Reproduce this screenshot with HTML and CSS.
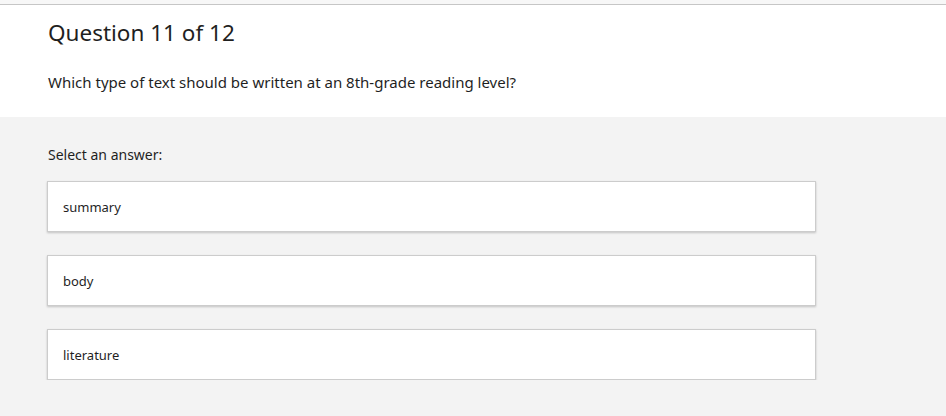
FILE: index.html
```html
<!DOCTYPE html>
<html lang="en">
  <head>
    <meta charset="UTF-8" />
    <title>Question 11 of 12</title>
    <link rel="stylesheet" href="styles.css">
  </head>
  <body>
    <div class="quiz-topline"></div>
    <div class="quiz-head">
      <h1 class="quiz-title">Question 11 of 12</h1>
      <p class="quiz-question">Which type of text should be written at an 8th-grade reading level?</p>
    </div>
    <div class="quiz-body">
      <div class="quiz-prompt">Select an answer:</div>
      <div class="quiz-options">
        <button class="quiz-option">summary</button>
        <button class="quiz-option">body</button>
        <button class="quiz-option">literature</button>
      </div>
    </div>
  </body>
</html>
```

FILE: styles.css
```css
body {
  margin: 0;
  background: #f3f3f3;
  font-family: "Noto Sans", "Open Sans", Arial, sans-serif;
  color: #1f1f1f;
}
.quiz-topline {
  height: 4px;
  background: #f7f7f7;
  border-bottom: 1px solid #c6c6c6;
  box-shadow: 0 1px 2px rgba(0, 0, 0, 0.08);
}
.quiz-head {
  background: #fff;
  padding: 12px 48px 0 48px;
  height: 100px;
}
.quiz-title {
  margin: 0;
  font-size: 22.5px;
  font-weight: 400;
  line-height: 32px;
}
.quiz-question {
  margin: 23px 0 0 0;
  font-size: 15px;
  line-height: 20px;
}
.quiz-body {
  padding: 28px 0 0 47px;
}
.quiz-prompt {
  font-size: 14px;
  line-height: 20px;
  margin-left: 1px;
  margin-bottom: 16px;
}
.quiz-options {
  display: flex;
  flex-direction: column;
  gap: 23px;
  width: 769px;
}
.quiz-option {
  display: block;
  text-align: left;
  height: 51px;
  background: #fff;
  border: 1px solid #cccccc;
  box-shadow: 0 1px 2px rgba(0, 0, 0, 0.2);
  padding: 0 15px;
  font-family: inherit;
  font-size: 13px;
  color: #1f1f1f;
  cursor: pointer;
}
```
